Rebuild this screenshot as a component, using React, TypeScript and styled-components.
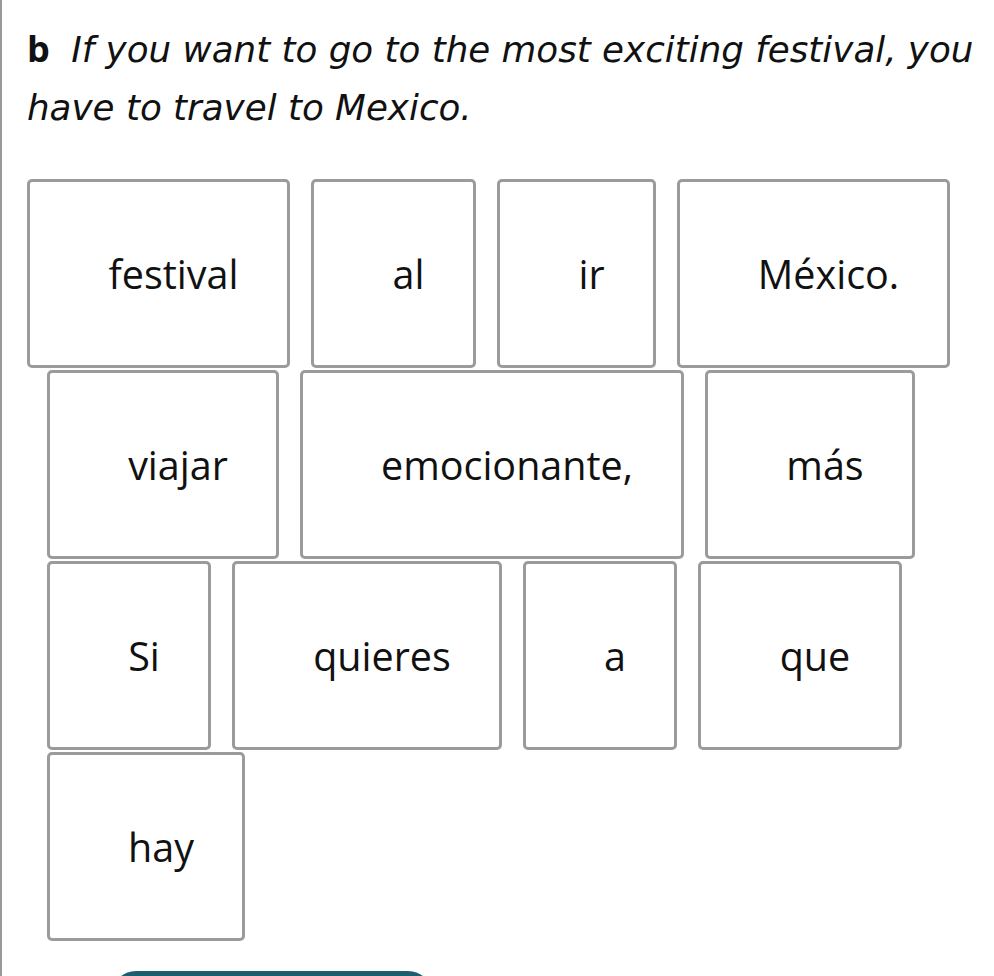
import React from 'react';
import styled, { createGlobalStyle } from 'styled-components';

const GlobalStyle = createGlobalStyle`
  html, body {
    margin: 0;
    padding: 0;
    background: #ffffff;
    overflow: hidden;
  }
`;

const Page = styled.div`
  min-height: 100vh;
  box-sizing: border-box;
  border-left: 2px solid #9a9a9a;
  padding: 20px 0 0 25px;
  font-family: 'Open Sans', 'Noto Sans', sans-serif;
  color: #111111;
`;

const Prompt = styled.p`
  margin: 0 0 43px;
  font-size: 36px;
  line-height: 57px;
  width: 955px;
`;

const Letter = styled.b`
  font-weight: 700;
  margin-right: 12px;
`;

const Sentence = styled.i`
  font-family: 'DejaVu Sans', sans-serif;
  font-style: italic;
  font-size: 35.7px;
`;

const Board = styled.div`
  display: flex;
  flex-direction: column;
  gap: 2px;
`;

interface RowProps {
  $indent: number;
}

const Row = styled.div<RowProps>`
  display: flex;
  gap: 21px;
  padding-left: ${(p) => p.$indent}px;
`;

interface TileProps {
  $width: number;
}

const Tile = styled.div<TileProps>`
  box-sizing: border-box;
  width: ${(p) => p.$width}px;
  height: 189px;
  border: 3px solid #9b9b9b;
  border-radius: 5px;
  background: #ffffff;
  display: flex;
  align-items: center;
  justify-content: center;
  padding-left: 30px;
  font-size: 39.5px;
  white-space: nowrap;
  cursor: grab;
`;

const CheckButton = styled.button`
  display: block;
  margin: 30px 0 0 85px;
  width: 320px;
  height: 48px;
  border: none;
  border-radius: 24px;
  background: #1b5e6f;
`;

// word tiles, laid out in the rows they wrap into
const rows: { indent: number; tiles: [string, number][] }[] = [
  { indent: 0, tiles: [['festival', 263], ['al', 165], ['ir', 159], ['México.', 273]] },
  { indent: 20, tiles: [['viajar', 232], ['emocionante,', 384], ['más', 210]] },
  { indent: 20, tiles: [['Si', 164], ['quieres', 270], ['a', 154], ['que', 204]] },
  { indent: 20, tiles: [['hay', 198]] },
];

export default function App() {
  return (
    <>
      <GlobalStyle />
      <Page>
        <Prompt>
          <Letter>b</Letter>{' '}
          <Sentence>If you want to go to the most exciting festival, you have to travel to Mexico.</Sentence>
        </Prompt>

        <Board>
          {rows.map((row, i) => (
            <Row key={i} $indent={row.indent}>
              {row.tiles.map(([word, width]) => (
                <Tile key={word} $width={width}>
                  {word}
                </Tile>
              ))}
            </Row>
          ))}
        </Board>

        <CheckButton aria-label="Check" />
      </Page>
    </>
  );
}
